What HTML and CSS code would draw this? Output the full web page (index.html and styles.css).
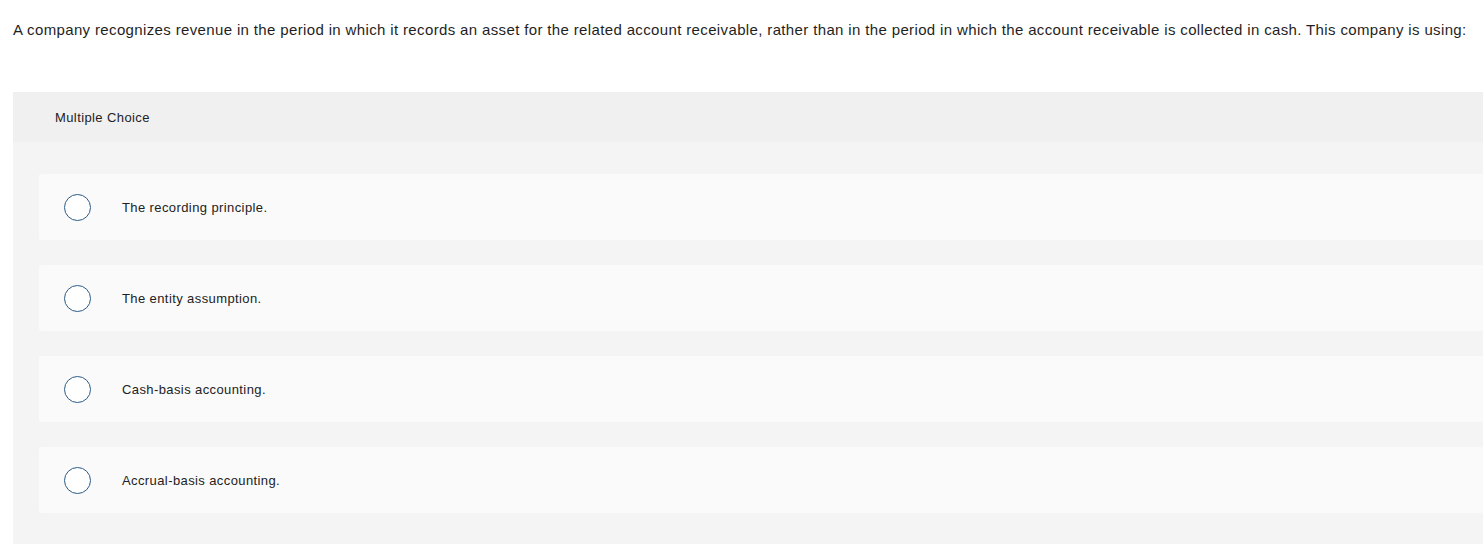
FILE: index.html
```html
<!DOCTYPE html>
<html>
<head>
<meta charset="utf-8">
<link rel="stylesheet" href="styles.css">
</head>
<body>
<p class="question">A company recognizes revenue in the period in which it records an asset for the related account receivable, rather than in the period in which the account receivable is collected in cash. This company is using:</p>
<div class="mc">
  <div class="mc-head">Multiple Choice</div>
  <div class="mc-body">
    <label class="option"><span class="radio"></span><span class="opt-text">The recording principle.</span></label>
    <label class="option"><span class="radio"></span><span class="opt-text">The entity assumption.</span></label>
    <label class="option"><span class="radio"></span><span class="opt-text">Cash-basis accounting.</span></label>
    <label class="option"><span class="radio"></span><span class="opt-text">Accrual-basis accounting.</span></label>
  </div>
</div>
</body>
</html>
```
FILE: styles.css
```css
html, body {
  margin: 0;
  padding: 0;
  background: #ffffff;
  overflow: hidden;
}
body {
  font-family: "Liberation Sans", Arial, sans-serif;
  color: #1f1f1f;
  width: 1483px;
  height: 544px;
}
.question {
  margin: 0;
  padding: 21px 0 0 13px;
  font-size: 15px;
  line-height: 18px;
  letter-spacing: 0.36px;
  white-space: nowrap;
  height: 92px;
  box-sizing: border-box;
}
.mc {
  margin-left: 13px;
  width: 1470px;
  overflow: hidden;
}
.mc-head {
  background: #f0f0f0;
  height: 50px;
  display: flex;
  align-items: center;
  padding-left: 42px;
  font-size: 13px;
  letter-spacing: 0.4px;
  color: #222;
}
.mc-body {
  background: #f4f4f4;
  padding: 32px 0 31px 26px;
  display: flex;
  flex-direction: column;
  gap: 25px;
}
.option {
  background: #fafafa;
  border-radius: 2px;
  height: 66px;
  display: flex;
  align-items: center;
  padding-left: 25px;
}
.radio {
  width: 25px;
  height: 25px;
  border: 1.5px solid #2c5a86;
  border-radius: 50%;
  background: #fff;
  flex: none;
}
.opt-text {
  margin-left: 31px;
  font-size: 13px;
  letter-spacing: 0.4px;
  color: #222;
}
```
